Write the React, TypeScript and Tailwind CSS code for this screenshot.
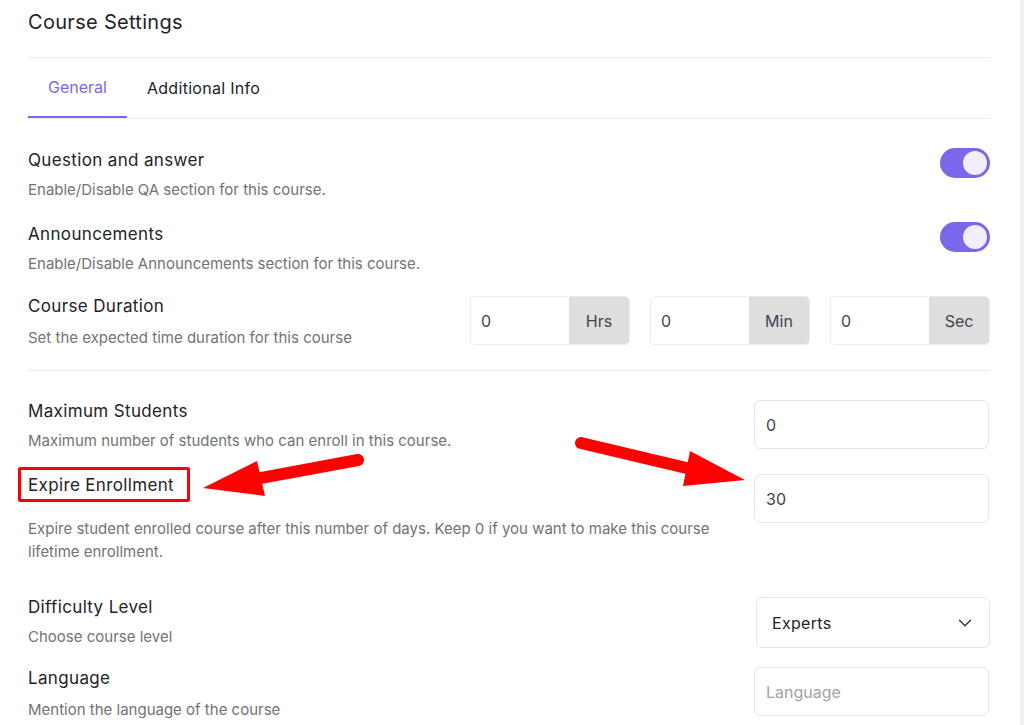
import { ChevronDown } from "lucide-react";

const font = { fontFamily: "Inter, 'Noto Sans', sans-serif" };

function Toggle() {
  return (
    <div className="flex h-[30px] w-[50px] items-center justify-end rounded-full bg-[#7a68ea] px-[3px]">
      <div className="h-[24px] w-[24px] rounded-full bg-[#f1efff]" />
    </div>
  );
}

function DurationInput({ unit }: { unit: string }) {
  return (
    <div className="flex h-[49px] w-[160px] overflow-hidden rounded-[5px] border border-[#ececec]">
      <div className="flex flex-1 items-center bg-white pl-[10px] text-[16px] text-[#41454f]">0</div>
      <div className="flex w-[60px] items-center justify-center bg-[#dedede] text-[16px] text-[#41454f]">{unit}</div>
    </div>
  );
}

function TextBox({ value, placeholder }: { value?: string; placeholder?: string }) {
  return (
    <div className="flex h-[49px] w-[235px] items-center rounded-[6px] border border-[#e6e6e6] bg-white pl-[11px] text-[16px]">
      {value ? <span className="text-[#41454f]">{value}</span> : <span className="text-[#a3a3a3]">{placeholder}</span>}
    </div>
  );
}

function Title({ children }: { children: React.ReactNode }) {
  return <div className="text-[17px] font-normal leading-[24px] tracking-[0.35px] text-[#212327]">{children}</div>;
}

function Desc({ children, className = "" }: { children: React.ReactNode; className?: string }) {
  return <div className={`text-[15px] leading-[20px] text-[#737373] ${className}`}>{children}</div>;
}

export default function App() {
  return (
    <div className="relative flex min-h-[725px] w-[1024px] overflow-hidden bg-white" style={font}>
      <div className="w-[1020px] pl-[28px] pr-[30px]">
        <div className="h-[58px] border-b border-[#ececec] pt-[8px] text-[20px] font-normal leading-[28px] tracking-[0.3px] text-[#212327]">
          Course Settings
        </div>
        <div className="flex h-[61px] border-b border-[#ececec]">
          <div className="flex items-center border-b-2 border-[#7a68ea] px-5 text-[16px] text-[#7a68ea]">General</div>
          <div className="flex items-center px-5 text-[16px] font-normal tracking-[0.3px] text-[#212327]">Additional Info</div>
        </div>

        <div className="mt-[29px] flex items-start justify-between">
          <div>
            <Title>Question and answer</Title>
            <Desc className="mt-[8px]">Enable/Disable QA section for this course.</Desc>
          </div>
          <Toggle />
        </div>

        <div className="mt-[22px] flex items-start justify-between">
          <div>
            <Title>Announcements</Title>
            <Desc className="mt-[8px]">Enable/Disable Announcements section for this course.</Desc>
          </div>
          <Toggle />
        </div>

        <div className="mt-[20px] flex items-start justify-between">
          <div>
            <Title>Course Duration</Title>
            <Desc className="mt-[10px]">Set the expected time duration for this course</Desc>
          </div>
          <div className="mt-[2px] flex gap-[20px]">
            <DurationInput unit="Hrs" />
            <DurationInput unit="Min" />
            <DurationInput unit="Sec" />
          </div>
        </div>

        <div className="mt-[22px] border-t border-[#ececec]" />

        <div className="mt-[28px] flex items-start justify-between">
          <div>
            <Title>Maximum Students</Title>
            <Desc className="mt-[8px]">Maximum number of students who can enroll in this course.</Desc>
          </div>
          <div className="mt-[1px] mr-[1px]">
            <TextBox value="0" />
          </div>
        </div>

        <div className="mt-[22px] flex items-start justify-between">
          <div className="w-[700px]">
            <div className="relative inline-block">
              <Title>Expire Enrollment</Title>
              <span className="absolute left-[-10px] top-[-6px] h-[35px] w-[172px] rounded-[2px] border-[3px] border-[#ff0000]" />
            </div>
            <Desc className="mt-[20px] leading-[23px]">
              Expire student enrolled course after this number of days. Keep 0 if you want to make this course lifetime enrollment.
            </Desc>
          </div>
          <div className="mt-[1px] mr-[1px]">
            <TextBox value="30" />
          </div>
        </div>

        <div className="mt-[32px] flex items-start justify-between">
          <div>
            <Title>Difficulty Level</Title>
            <Desc className="mt-[8px]">Choose course level</Desc>
          </div>
          <div className="mt-[2px] flex h-[51px] w-[234px] items-center justify-between rounded-[6px] border border-[#e6e6e6] pl-[15px] pr-[13px] text-[16px] tracking-[0.3px] text-[#212327]">
            <span>Experts</span>
            <ChevronDown size={22} strokeWidth={1.5} className="text-[#333]" />
          </div>
        </div>

        <div className="mt-[18px] flex items-start justify-between">
          <div>
            <Title>Language</Title>
            <Desc className="mt-[10px]">Mention the language of the course</Desc>
          </div>
          <div className="mt-[1px] mr-[1px]">
            <TextBox placeholder="Language" />
          </div>
        </div>
      </div>
      <div className="w-[4px] bg-[#f1f1f1]" />

      <svg className="pointer-events-none absolute left-0 top-0" width="1024" height="725" viewBox="0 0 1024 725">
        <line x1="358" y1="460" x2="250" y2="480" stroke="#ff0000" strokeWidth="12" strokeLinecap="round" />
        <polygon points="203,488 257,461 265,496" fill="#ff0000" />
        <line x1="581" y1="443" x2="695" y2="470" stroke="#ff0000" strokeWidth="12" strokeLinecap="round" />
        <polygon points="745,480 690,451 683,486" fill="#ff0000" />
      </svg>
    </div>
  );
}
